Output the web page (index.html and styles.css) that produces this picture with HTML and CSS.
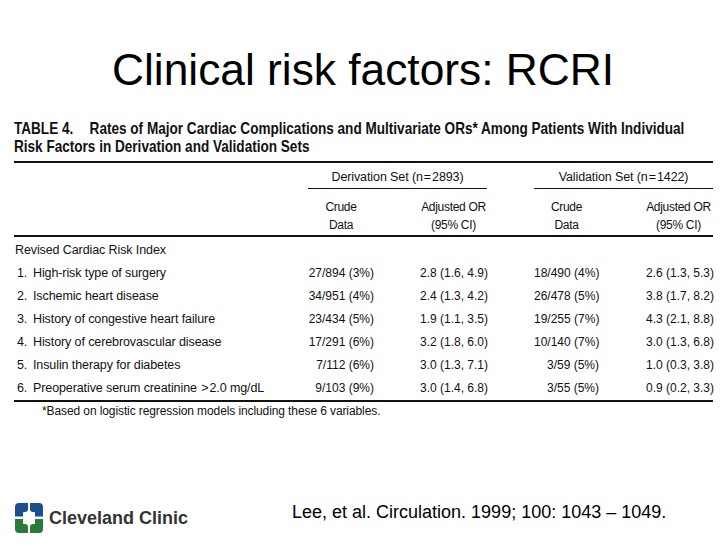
FILE: index.html
```html
<!DOCTYPE html>
<html lang="en">
<head>
<meta charset="utf-8">
<title>Clinical risk factors: RCRI</title>
<link rel="stylesheet" href="styles.css">
</head>
<body>
<div class="slide">
  <h1 class="title">Clinical risk factors: RCRI</h1>
  <div class="table-block">
    <div class="caption"><span class="tno">TABLE 4.</span>Rates of Major Cardiac Complications and Multivariate ORs* Among Patients With Individual<br>Risk Factors in Derivation and Validation Sets</div>
    <table class="data">
      <colgroup>
        <col class="w-lab"><col class="w-c1"><col class="w-g1"><col class="w-c2"><col class="w-g2"><col class="w-c3"><col class="w-g3"><col class="w-c4"><col class="w-pad">
      </colgroup>
      <thead>
        <tr class="hr1">
          <th rowspan="2" class="lab"></th>
          <th colspan="3" class="grp">Derivation Set (n<span class="eq">=</span>2893)</th>
          <th class="gap"></th>
          <th colspan="4" class="grp">Validation Set (n<span class="eq">=</span>1422)</th>
        </tr>
        <tr class="hr2">
          <th class="sub">Crude<br>Data</th>
          <th></th>
          <th class="sub">Adjusted OR<br>(95% CI)</th>
          <th></th>
          <th class="sub">Crude<br>Data</th>
          <th></th>
          <th class="sub">Adjusted OR<br>(95% CI)</th>
          <th></th>
        </tr>
      </thead>
      <tbody>
        <tr class="sect"><td colspan="9">Revised Cardiac Risk Index</td></tr>
        <tr><td class="lab"><span class="num">1.</span>High-risk type of surgery</td><td class="n">27/894 (3%)</td><td></td><td class="n">2.8 (1.6, 4.9)</td><td></td><td class="n">18/490 (4%)</td><td></td><td class="n">2.6 (1.3, 5.3)</td><td></td></tr>
        <tr><td class="lab"><span class="num">2.</span>Ischemic heart disease</td><td class="n">34/951 (4%)</td><td></td><td class="n">2.4 (1.3, 4.2)</td><td></td><td class="n">26/478 (5%)</td><td></td><td class="n">3.8 (1.7, 8.2)</td><td></td></tr>
        <tr><td class="lab"><span class="num">3.</span>History of congestive heart failure</td><td class="n">23/434 (5%)</td><td></td><td class="n">1.9 (1.1, 3.5)</td><td></td><td class="n">19/255 (7%)</td><td></td><td class="n">4.3 (2.1, 8.8)</td><td></td></tr>
        <tr><td class="lab"><span class="num">4.</span>History of cerebrovascular disease</td><td class="n">17/291 (6%)</td><td></td><td class="n">3.2 (1.8, 6.0)</td><td></td><td class="n">10/140 (7%)</td><td></td><td class="n">3.0 (1.3, 6.8)</td><td></td></tr>
        <tr><td class="lab"><span class="num">5.</span>Insulin therapy for diabetes</td><td class="n">7/112 (6%)</td><td></td><td class="n">3.0 (1.3, 7.1)</td><td></td><td class="n">3/59 (5%)</td><td></td><td class="n">1.0 (0.3, 3.8)</td><td></td></tr>
        <tr class="last"><td class="lab"><span class="num">6.</span>Preoperative serum creatinine <span class="eq">&gt;</span>2.0 mg/dL</td><td class="n">9/103 (9%)</td><td></td><td class="n">3.0 (1.4, 6.8)</td><td></td><td class="n">3/55 (5%)</td><td></td><td class="n">0.9 (0.2, 3.3)</td><td></td></tr>
      </tbody>
    </table>
    <div class="footnote">*Based on logistic regression models including these 6 variables.</div>
  </div>
  <div class="footer">
    <div class="brand">
      <svg class="logo" width="28" height="30" viewBox="0 0 28 30" aria-hidden="true">
        <path d="M0 4 Q0 0 4 0 H13 V6 Q13 9 10 9 H9 Q8 9 8 10 V13.5 H0 Z" fill="#1c4d8f"/>
        <path d="M28 4 Q28 0 24 0 H15 V6 Q15 9 18 9 H19 Q20 9 20 10 V13.5 H28 Z" fill="#1c4d8f"/>
        <path d="M0 26 Q0 30 4 30 H13 V24 Q13 21 10 21 H9 Q8 21 8 20 V16 H0 Z" fill="#2c7a3a"/>
        <path d="M28 26 Q28 30 24 30 H15 V24 Q15 21 18 21 H19 Q20 21 20 20 V16 H28 Z" fill="#2c7a3a"/>
      </svg>
      <span class="brand-name">Cleveland Clinic</span>
    </div>
    <div class="cite">Lee, et al. Circulation. 1999; 100: 1043 – 1049.</div>
  </div>
</div>
</body>
</html>
```

FILE: styles.css
```css
html, body {
  margin: 0;
  padding: 0;
  background: #ffffff;
}
body {
  width: 728px;
  height: 546px;
  overflow: hidden;
  font-family: "Liberation Sans", Arial, sans-serif;
  color: #000;
}
.slide {
  display: flex;
  flex-direction: column;
  width: 728px;
  height: 546px;
}
.title {
  margin: 0;
  padding: 44px 0 0 112px;
  font-family: "Liberation Sans", Arial, sans-serif;
  font-weight: normal;
  font-size: 44.3px;
  line-height: 52px;
  color: #000;
}
.table-block {
  padding: 23px 0 0 14px;
  color: #111;
}
.caption {
  font-family: "Liberation Sans", Arial, sans-serif;
  font-weight: bold;
  font-size: 16.5px;
  line-height: 18.3px;
  white-space: nowrap;
  transform: scaleX(0.822);
  transform-origin: 0 0;
}
.tno {
  display: inline-block;
  width: 92px;
}
.data {
  margin-top: 5.5px;
  width: 699px;
  table-layout: fixed;
  border-collapse: separate;
  border-spacing: 0;
  font-family: "Liberation Sans", Arial, sans-serif;
  font-size: 12.5px;
}
.w-lab { width: 294px; }
.w-c1 { width: 66px; }
.w-g1 { width: 46px; }
.w-c2 { width: 67px; }
.w-g2 { width: 47px; }
.w-c3 { width: 65px; }
.w-g3 { width: 47px; }
.w-c4 { width: 65px; }
.w-pad { width: 2px; }
.data th, .data td {
  padding: 0;
  font-weight: normal;
  white-space: nowrap;
  overflow: visible;
}
.hr1 th {
  border-top: 2px solid #111;
  line-height: 16px;
  padding: 6px 0 3px;
}
.hr1 th.grp {
  border-bottom: 1px solid #111;
  text-align: center;
  letter-spacing: -0.1px;
}
.hr1 th.lab {
  border-bottom: 2px solid #111;
}
.hr2 th {
  border-bottom: 2px solid #111;
  line-height: 18px;
  padding: 9px 0 1px;
  text-align: center;
  font-size: 12px;
  letter-spacing: -0.3px;
}
.eq {
  padding: 0 1px;
}
.data tbody td {
  height: 23px;
  line-height: 23px;
  vertical-align: middle;
}
.data tbody tr.sect td {
  padding: 2px 0 0 1px;
  height: 21px;
  letter-spacing: -0.1px;
}
.data td.lab {
  padding-left: 3px;
  letter-spacing: -0.1px;
}
.num {
  display: inline-block;
  width: 16px;
}
.data td.n {
  text-align: right;
  font-size: 12px;
}
.data tr.last td {
  border-bottom: 2px solid #111;
}
.footnote {
  font-family: "Liberation Sans", Arial, sans-serif;
  font-size: 12px;
  letter-spacing: -0.1px;
  line-height: 16px;
  padding: 1px 0 0 28px;
}
.footer {
  margin-top: auto;
  display: flex;
  align-items: center;
  padding: 0 0 13px 15px;
}
.brand {
  display: flex;
  align-items: center;
  gap: 6px;
  width: 277px;
}
.logo {
  display: block;
  flex: none;
}
.brand-name {
  font-family: "Liberation Sans", Arial, sans-serif;
  font-weight: bold;
  font-size: 18px;
  color: #333;
}
.cite {
  font-family: "Liberation Sans", Arial, sans-serif;
  font-size: 18px;
  margin-top: -12px;
}
```
